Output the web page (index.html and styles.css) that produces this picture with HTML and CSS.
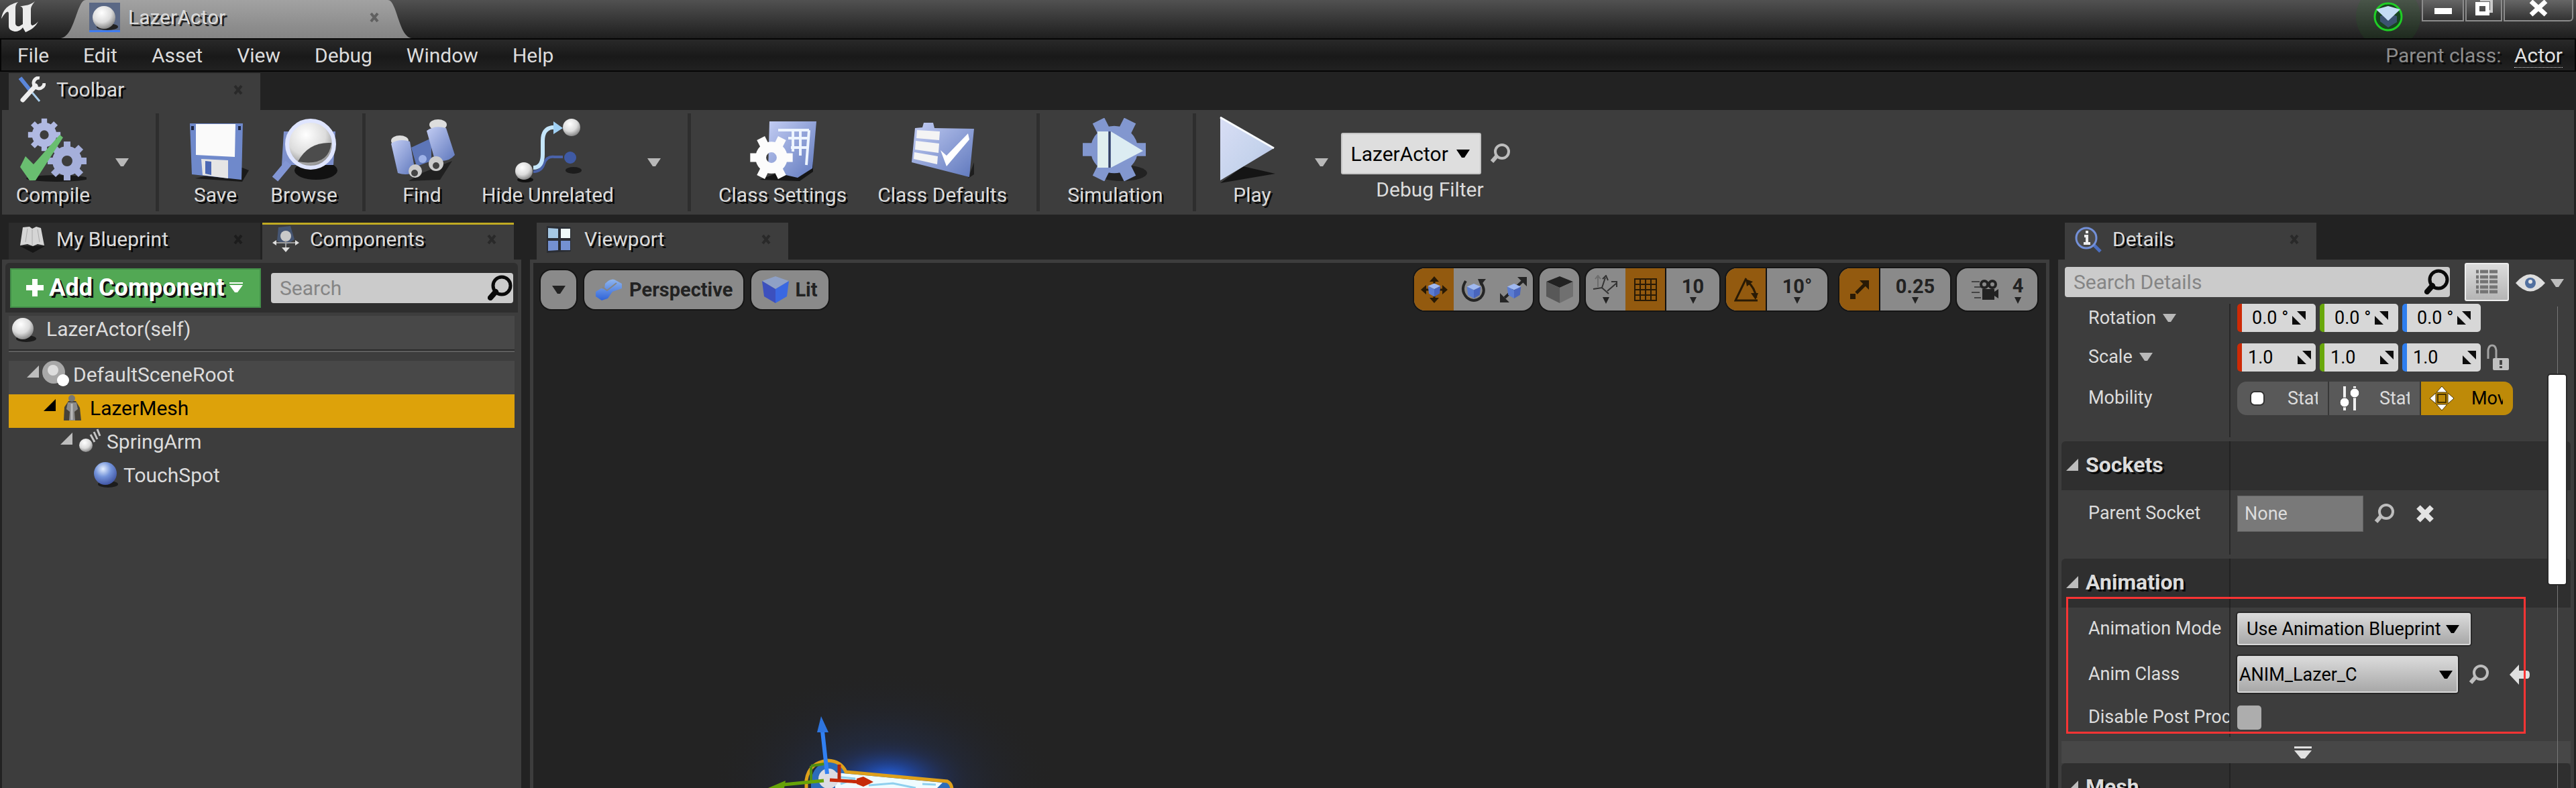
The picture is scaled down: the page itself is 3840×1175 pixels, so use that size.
FILE: index.html
```html
<!DOCTYPE html>
<html lang="en">
  <head>
    <meta charset="UTF-8" />
    <meta name="viewport" content="width=device-width, initial-scale=1.0" />
    <title>LazerActor</title>
    <link rel="stylesheet" href="styles.css">
  </head>
  <body>
    <!-- Shared icon shapes -->
    <svg class="defs" width="0" height="0" aria-hidden="true">
      <defs>
        <linearGradient id="blue" x1="0" y1="0" x2="1" y2="1">
          <stop offset="0" stop-color="#c3cdf3" />
          <stop offset="1" stop-color="#5f78bd" />
        </linearGradient>
        <linearGradient id="deep" x1="0" y1="0" x2="0" y2="1">
          <stop offset="0" stop-color="#8eb5ee" />
          <stop offset="1" stop-color="#2f63d8" />
        </linearGradient>
        <linearGradient id="pale" x1="0" y1="0" x2="1" y2="1">
          <stop offset="0" stop-color="#d9def5" />
          <stop offset="0.6" stop-color="#c5d3ec" />
          <stop offset="1" stop-color="#b0b9de" />
        </linearGradient>
        <radialGradient id="ball" cx="0.4" cy="0.3" r="0.7">
          <stop offset="0" stop-color="#fff" />
          <stop offset="0.6" stop-color="#dcdcdc" />
          <stop offset="1" stop-color="#8a8a8a" />
        </radialGradient>
        <radialGradient id="blueball" cx="0.4" cy="0.3" r="0.7">
          <stop offset="0" stop-color="#e6f0ff" />
          <stop offset="0.5" stop-color="#7393da" />
          <stop offset="1" stop-color="#4257a5" />
        </radialGradient>
        <symbol id="gear" viewBox="0 0 60 60">
          <circle cx="30" cy="30" r="15" fill="none" stroke="currentColor" stroke-width="14" />
          <path d="M30 1v12M30 47v12M1 30h12M47 30h12M9.500 9.500l8.500 8.500M42 42l8.500 8.500M50.500 9.500l-8.500 8.500M18 42l-8.500 8.500" stroke="currentColor" stroke-width="10" />
        </symbol>
        <symbol id="gear6" viewBox="0 0 100 96">
          <circle cx="50" cy="48" r="24" fill="none" stroke="currentColor" stroke-width="24" />
          <path d="M2 48h20M78 48h20M26 4l10 20M74 4l-10 20M26 92l10-20M74 92l-10-20" stroke="currentColor" stroke-width="20" />
        </symbol>
        <symbol id="lens" viewBox="0 0 32 32">
          <circle cx="18" cy="13" r="10" fill="none" stroke="currentColor" stroke-width="4" />
          <path d="M10 20L3 28" stroke="currentColor" stroke-width="6" />
        </symbol>
        <symbol id="lens-big" viewBox="0 0 38 38">
          <circle cx="21" cy="16" r="13" fill="none" stroke="currentColor" stroke-width="5" />
          <path d="M12 25L4 34" stroke="currentColor" stroke-width="8" stroke-linecap="round" />
        </symbol>
        <symbol id="down" viewBox="0 0 20 12"><path d="M0 0h20L12 12h-4z" fill="currentColor" /></symbol>
        <symbol id="tri" viewBox="0 0 18 18"><path d="M18 0v18H0z" fill="currentColor" /></symbol>
        <symbol id="close" viewBox="0 0 16 16"><path d="M3 2l10 12M13 2L3 14" stroke="currentColor" stroke-width="4" /></symbol>
        <symbol id="spin" viewBox="0 0 22 22"><path d="M8 1h13v13zM1 8v13h13z" fill="currentColor" /></symbol>
        <symbol id="cube" viewBox="0 0 30 30">
          <path d="M15 0L29 6L15 13L1 6z" fill="#a0b9f0" /><path d="M1 6l14 7v17L3 23z" fill="#5b7cd0" /><path d="M29 6L15 13v17l12-7z" fill="#4965bd" />
        </symbol>
      </defs>
    </svg>

    <!-- Title bar -->
    <header class="titlebar">
      <svg class="logo" width="60" height="50" viewBox="0 0 60 50"><path d="M2 28C4 16 9 8 27 3c-3 3-4 5-4 9v23c0 3 3 5 6 4l5-3V14c0-2-1-4-4-5 7 0 16-2 22-7-4 5-6 8-6 12v20c0 5 3 6 11-2-4 8-11 13-19 16l-4-7c-3 4-7 6-12 6-5-1-9-3-9-8V21c0-5-3-6-11 7z" fill="#ececec" /></svg>
      <div class="window-tab">
        <svg class="tab-shape" viewBox="0 0 524 57" preserveAspectRatio="none"><defs><linearGradient id="tabfill" x1="0" y1="0" x2="0" y2="1"><stop offset="0" stop-color="#a2a2a2" /><stop offset="1" stop-color="#848484" /></linearGradient></defs><path d="M0 57C22 55 24 0 38 0H488C502 0 504 55 524 57z" fill="url(#tabfill)" /></svg>
        <svg width="46" height="44" viewBox="0 0 46 44"><rect width="46" height="44" fill="#5a6885" /><rect y="41" width="46" height="3" fill="#3f7cf0" /><ellipse cx="27" cy="36" rx="16" ry="5" fill="#222" /><circle cx="22" cy="22" r="17" fill="url(#ball)" /></svg>
        <span>LazerActor</span>
        <button class="close" aria-label="Close tab"><svg width="16" height="16"><use href="#close" /></svg></button>
      </div>
      <svg class="status" width="100" height="57" viewBox="0 0 100 57">
        <circle cx="50" cy="25" r="48" fill="#1d6a1d" opacity="0.16" />
        <circle cx="50" cy="25" r="20" fill="#17451f" stroke="#1fce25" stroke-width="3" />
        <path d="M38 24l12-4 13 4v9L50 41 38 32z" fill="#3c5370" /><path d="M32 14l18-5 18 5-18 17z" fill="#c4dcf4" />
      </svg>
      <div class="window-buttons">
        <button aria-label="Minimize"><svg width="28" height="32"><rect y="13" x="1" width="26" height="9" fill="#fff" /></svg></button>
        <button class="narrow" aria-label="Restore"><svg width="28" height="32"><path d="M8 1h17v17h-4" fill="none" stroke="#ccc" stroke-width="4" /><rect x="4" y="7" width="15" height="14" fill="none" stroke="#fff" stroke-width="6" /></svg></button>
        <button class="wide" aria-label="Close"><svg width="28" height="32"><path d="M3 3l22 20M25 3L3 23" stroke="#fff" stroke-width="7" /></svg></button>
      </div>
    </header>

    <!-- Menu -->
    <nav class="menubar">
      <button>File</button>
      <button>Edit</button>
      <button>Asset</button>
      <button>View</button>
      <button>Debug</button>
      <button>Window</button>
      <button>Help</button>
      <div class="parent-class">Parent class: <a href="#">Actor</a></div>
    </nav>

    <!-- Toolbar -->
    <section class="toolbar-panel">
      <div class="tabs">
        <div class="tab">
          <svg width="40" height="40" viewBox="0 0 40 40"><path d="M2 2l16 20" stroke="#5b87dc" stroke-width="6" /><path d="M20 24l11 13" stroke="#a9cdea" stroke-width="3" /><path d="M6 35L25 14" stroke="#eee" stroke-width="7" stroke-linecap="round" /><path d="M31 2a8 8 0 1 0 7 8" fill="none" stroke="#eee" stroke-width="5" /></svg>
          <span>Toolbar</span>
          <button class="close" aria-label="Close tab"><svg width="16" height="16"><use href="#close" /></svg></button>
        </div>
      </div>
      <div class="toolbar">
        <button class="tool">
          <svg width="100" height="96" viewBox="0 0 100 96"><ellipse cx="56" cy="90" rx="46" ry="5" fill="#191919" /><svg x="12" y="0" width="50" height="50" color="#b0b9e2"><use href="#gear" /></svg><svg x="41" y="34" width="60" height="60" color="#a5afda"><use href="#gear" /></svg><path d="M1 73l8-16 12 12L60 25l5 4L24 93h-9z" fill="#69be70" /></svg>
          <span>Compile</span>
        </button>
        <button class="tool-arrow" aria-label="Compile options"><svg width="20" height="12"><use href="#down" /></svg></button>
        <i class="sep"></i>
        <button class="tool">
          <svg width="100" height="96" viewBox="0 0 100 96"><path d="M20 90l70-16 10 4-10 17z" fill="#1a1a1a" /><path d="M12 8h79l-2 84-74-8z" fill="#6f89cb" /><path d="M21 9h59l-1 49-58-3z" fill="#fafafa" /><path d="M29 61l40 2v27l-38-5z" fill="#e5e5e5" /><path d="M35 64l9 1v20l-9-2z" fill="#4c68b4" /><path d="M14 12h4v6h-4zM84 12h4v6h-4z" fill="#1c2540" /></svg>
          <span>Save</span>
        </button>
        <button class="tool">
          <svg width="100" height="96" viewBox="0 0 100 96"><ellipse cx="68" cy="78" rx="32" ry="14" fill="#111" /><path d="M20 20h77l-3 50H17z" fill="#7d90cc" /><path d="M27 67L7 91" stroke="#8296d4" stroke-width="11" /><circle cx="60" cy="39" r="35" fill="url(#ball)" stroke="#dfe5ff" stroke-width="6" /><path d="M41 65q16-30 50-28-4 36-50 28z" fill="#4c4c4c" /></svg>
          <span>Browse</span>
        </button>
        <i class="sep"></i>
        <button class="tool">
          <svg width="100" height="96" viewBox="0 0 100 96"><path d="M30 94l20-12 45-18-18 28z" fill="#202020" /><path d="M34 44l30-14v34l-22 8z" fill="#5d76b8" /><ellipse cx="17" cy="34" rx="13" ry="8" fill="#ddd" /><path d="M4 38q12-8 28-3l8 45q-12 7-26 2z" fill="url(#blue)" /><ellipse cx="74" cy="10" rx="13" ry="8" fill="#ddd" /><path d="M57 19q12-9 29-4l13 40q-11 13-30 7z" fill="url(#blue)" /><circle cx="40" cy="79" r="10" fill="#ccc" /><circle cx="39" cy="82" r="5" fill="#444" /><circle cx="71" cy="68" r="11" fill="#ccc" /><circle cx="71" cy="71" r="5" fill="#444" /><circle cx="51" cy="61" r="6" fill="#9db2e8" /></svg>
          <span>Find</span>
        </button>
        <button class="tool roomy">
          <svg width="100" height="96" viewBox="0 0 100 96"><ellipse cx="88" cy="78" rx="12" ry="5" fill="#1c1c1c" /><ellipse cx="16" cy="92" rx="12" ry="4" fill="#111" /><path d="M28 80q12 0 16-12t16-10h12" fill="none" stroke="#4a62a8" stroke-width="4" /><circle cx="83" cy="59" r="9" fill="#3f5aa4" /><path d="M28 74q14 0 14-20V34q0-18 14-20h4" fill="none" stroke="#c5e6fb" stroke-width="6" /><path d="M58 5l14 10-14 9z" fill="#9fd0f5" /><circle cx="85" cy="14" r="13" fill="url(#ball)" /><circle cx="14" cy="79" r="13" fill="url(#ball)" /></svg>
          <span>Hide Unrelated</span>
        </button>
        <button class="tool-arrow" aria-label="Hide options"><svg width="20" height="12"><use href="#down" /></svg></button>
        <i class="sep"></i>
        <button class="tool roomy">
          <svg width="100" height="96" viewBox="0 0 100 96"><path d="M15 92l80-30v18L75 94z" fill="#151515" /><path d="M30 5h70l-6 70-22 14-44-10z" fill="url(#blue)" /><path d="M43 18h46M58 30h32M62 44h26M65 18v32M76 18v38M89 18l-4 52" stroke="#eef5ff" stroke-width="4" fill="none" /><svg x="0" y="24" width="66" height="70" color="#fcfcfc"><use href="#gear6" /></svg></svg>
          <span>Class Settings</span>
        </button>
        <button class="tool roomy">
          <svg width="100" height="96" viewBox="0 0 100 96"><path d="M88 90l9-24v18z" fill="#1d1d1d" /><path d="M22 7h14l2 8 59 1-7 72L4 66 9 15l11-1z" fill="url(#blue)" /><path d="M12 18l34 2-1 13-34-3zM10 34l35 4-1 14-35-5zM8 51l35 6-1 12-35-8z" fill="#f4f4f4" /><path d="M47 48l9 8L88 23l2 9-34 40z" fill="#fff" /></svg>
          <span>Class Defaults</span>
        </button>
        <i class="sep"></i>
        <button class="tool roomy">
          <svg width="100" height="96" viewBox="0 0 100 96"><ellipse cx="60" cy="82" rx="38" ry="12" fill="#222" /><svg width="98" height="94" color="#8297cf"><use href="#gear6" /></svg><circle cx="49" cy="48" r="20" fill="#8297cf" /><path d="M24 20h16v54H24z" fill="#e0efef" /><path d="M44 20l48 29-48 25z" fill="#dcecf2" /><path d="M42 20v54" stroke="#35415f" stroke-width="3" /></svg>
          <span>Simulation</span>
        </button>
        <i class="sep"></i>
        <button class="tool">
          <svg width="100" height="100" viewBox="0 0 100 100"><path d="M2 99l34-25 48 11z" fill="#151515" /><path d="M2 0l80 47L2 95z" fill="url(#pale)" /><path d="M2 1l80 46" stroke="#f8fbff" stroke-width="3" /></svg>
          <span>Play</span>
        </button>
        <button class="tool-arrow" aria-label="Play options"><svg width="20" height="12"><use href="#down" /></svg></button>
        <div class="debug-filter">
          <div class="debug-row">
            <div class="select flat">
              <select id="debug-filter"><option>LazerActor</option></select>
              <svg width="20" height="12"><use href="#down" /></svg>
            </div>
            <button class="icon-btn" aria-label="Find object"><svg width="32" height="32"><use href="#lens" /></svg></button>
          </div>
          <label for="debug-filter">Debug Filter</label>
        </div>
      </div>
    </section>

    <main class="panels">
      <!-- Components -->
      <section class="components">
        <div class="tabs">
          <div class="tab inactive">
            <svg width="40" height="40" viewBox="0 0 40 40"><path d="M2 30h37l-18 10z" fill="#161616" /><path d="M6 2l10-1 4 3 6-3 7 2 5 26-10-2-7 3-8-3-11 2z" fill="#d5d5d5" /><path d="M20 5v24M13 4l-3 20M28 5l3 19" stroke="#aaa" stroke-width="1" /></svg>
            <span>My Blueprint</span>
            <button class="close" aria-label="Close tab"><svg width="16" height="16"><use href="#close" /></svg></button>
          </div>
          <div class="tab active">
            <svg width="40" height="40" viewBox="0 0 40 40"><path d="M9 2l18-2 6 20-12 8-14-6z" fill="#465673" /><circle cx="20" cy="15" r="8" fill="#c9c9c9" /><path d="M20 22v12M4 25h32" stroke="#999" stroke-width="2" /><path d="M0 25l6-4v8zM40 25l-6-4v8zM14 32h12l-6 7z" fill="#ddd" /></svg>
            <span>Components</span>
            <button class="close" aria-label="Close tab"><svg width="16" height="16"><use href="#close" /></svg></button>
          </div>
        </div>
        <div class="panel-body">
          <div class="add-bar">
            <button class="add-button">
              <svg width="28" height="28" viewBox="0 0 28 28"><path d="M14 1v26M1 14h26" stroke="#fff" stroke-width="8" /></svg>
              <span>Add Component</span>
              <svg width="20" height="16" viewBox="0 0 20 16"><path d="M0 0h20v2H0zM0 4h20l-8 11H8z" fill="#fff" /></svg>
            </button>
            <div class="search">
              <input type="text" placeholder="Search" aria-label="Search components" />
              <svg width="38" height="38"><use href="#lens-big" /></svg>
            </div>
          </div>
          <div class="self-row">
            <svg width="40" height="40" viewBox="0 0 40 40"><ellipse cx="24" cy="34" rx="15" ry="5" fill="#1c1c1c" /><circle cx="19" cy="19" r="16" fill="url(#ball)" /></svg>
            <span>LazerActor(self)</span>
          </div>
          <ul class="tree">
            <li class="level-1 shaded">
              <svg class="expander" width="18" height="18"><use href="#tri" /></svg>
              <svg width="41" height="40" viewBox="0 0 41 40"><circle cx="18" cy="17" r="17" fill="#a8a8a8" /><circle cx="17" cy="14" r="8" fill="#ddd" /><circle cx="32" cy="29" r="9" fill="#fff" /></svg>
              <span>DefaultSceneRoot</span>
            </li>
            <li class="level-2 selected">
              <svg class="expander" width="18" height="18"><use href="#tri" /></svg>
              <svg width="41" height="40" viewBox="0 0 41 40"><path d="M8 39l1-20 6-9h11l6 10 2 19z" fill="#46423a" /><circle cx="20" cy="6" r="5" fill="#777" /><path d="M14 12h13l2 10-5 4 1 13H16l1-13-5-4z" fill="#8a8a8a" /><path d="M20 14v24" stroke="#bbb" stroke-width="3" /></svg>
              <span>LazerMesh</span>
            </li>
            <li class="level-3">
              <svg class="expander" width="18" height="18"><use href="#tri" /></svg>
              <svg width="41" height="40" viewBox="0 0 41 40"><circle cx="16" cy="26" r="10" fill="url(#ball)" /><path d="M23 10l6 11M28 6l5 11M33 2l4 10" stroke="#c4c4c4" stroke-width="3" /></svg>
              <span>SpringArm</span>
            </li>
            <li class="level-4">
              <svg class="expander" width="18" height="18"></svg>
              <svg width="41" height="40" viewBox="0 0 41 40"><ellipse cx="24" cy="34" rx="15" ry="5" fill="#1c1c1c" /><circle cx="20" cy="18" r="17" fill="url(#blueball)" /></svg>
              <span>TouchSpot</span>
            </li>
          </ul>
        </div>
      </section>

      <!-- Viewport -->
      <section class="viewport">
        <div class="tabs">
          <div class="tab">
            <svg width="40" height="40" viewBox="0 0 40 40"><path d="M0 0l36 2v36L0 40z" fill="#2a2d33" /><path d="M2 3l15 1v14H2z" fill="#a5c8e4" /><path d="M21 4h14v14H21z" fill="#eefafa" /><path d="M2 22h15v14l-15 1zM21 22h14v14H21z" fill="#7491d2" /></svg>
            <span>Viewport</span>
            <button class="close" aria-label="Close tab"><svg width="16" height="16"><use href="#close" /></svg></button>
          </div>
        </div>
        <div class="viewport-body">
          <div class="viewport-bar">
            <div class="pill low"><button class="menu-pill" aria-label="Viewport options"><svg width="20" height="12"><use href="#down" /></svg></button></div>
            <div class="pill low"><button class="text-pill"><svg width="42" height="32" viewBox="0 0 42 32"><path d="M1 19l8-5 5 1 1-8q8-8 14-6l11 6v7L26 19l-7 10-9 3-9-6z" fill="url(#deep)" /><path d="M11 12l7 5 14-11" stroke="#858585" stroke-width="2" fill="none" /></svg>Perspective</button></div>
            <div class="pill low"><button class="text-pill"><svg width="40" height="40" viewBox="0 0 40 40"><path d="M20 0l20 7-20 12L0 7z" fill="#8ea0c6" /><path d="M0 7l20 12v21L3 30z" fill="#3c50be" /><path d="M40 7L20 19v21l17-10z" fill="#3a68e2" /></svg>Lit</button></div>
            <div class="bar-fill"></div>
            <div class="pill">
              <button class="on" aria-label="Translate"><svg width="40" height="40" viewBox="0 0 40 40"><path d="M20 3v34M3 20h34" stroke="#291a05" stroke-width="3" /><path d="M20 0l7 8H13zM20 40l7-8H13zM0 20l8-7v14zM40 20l-8-7v14z" fill="#291a05" /><svg x="10" y="10" width="20" height="21"><use href="#cube" /></svg></svg></button>
              <button aria-label="Rotate"><svg width="40" height="40" viewBox="0 0 40 40"><path d="M8 7q-9 14 2 25 10 8 20 0 9-10 1-22" fill="none" stroke="#252525" stroke-width="4" /><path d="M26 4h12l-8 10z" fill="#252525" /><svg x="9" y="11" width="22" height="22"><use href="#cube" /></svg></svg></button>
              <button aria-label="Scale"><svg width="40" height="40" viewBox="0 0 40 40"><path d="M26 1h14v14zM0 25v14h14z" fill="#252525" /><path d="M7 32L34 7" stroke="#252525" stroke-width="4" /><svg x="10" y="11" width="22" height="22"><use href="#cube" /></svg></svg></button>
            </div>
            <div class="pill"><button aria-label="Coordinate system"><svg width="40" height="40" viewBox="0 0 40 40"><path d="M20 0l20 8-20 9L0 8z" fill="#222" /><path d="M0 8l20 9v23L0 30z" fill="#585858" /><path d="M40 8l-20 9v23l20-10z" fill="#707070" /></svg></button></div>
            <div class="pill">
              <button class="with-caret" aria-label="Surface snapping"><svg class="snap" width="40" height="32" viewBox="0 0 40 32"><path d="M1 21l13-2 10 9M14 19L19 4M22 24L36 12" fill="none" stroke="#333" stroke-width="2" /><path d="M28 10h8v8M15 6l5-5 3 7" fill="none" stroke="#333" stroke-width="2" /><path d="M8 18V3M4 6l4-5 4 5" fill="none" stroke="#6c6c6c" stroke-width="2" /></svg><svg class="caret" width="10" height="10" viewBox="0 0 10 10"><path d="M0 0h10L5 10z" fill="#222" /></svg></button>
              <button class="on edge" aria-label="Grid snap"><svg width="34" height="34" viewBox="0 0 34 34"><path d="M1 1h32v32H1zM9 1v32M17 1v32M25 1v32M1 9h32M1 17h32M1 25h32" fill="none" stroke="#291a05" stroke-width="2" /></svg></button>
              <button class="with-caret value">10<svg class="caret" width="10" height="10" viewBox="0 0 10 10"><path d="M0 0h10L5 10z" fill="#222" /></svg></button>
            </div>
            <div class="pill">
              <button class="on edge" aria-label="Rotation snap"><svg width="36" height="36" viewBox="0 0 36 36"><path d="M18 1L2 34h33M20 6q11 9 13 24" fill="none" stroke="#291a05" stroke-width="3" /><path d="M17 2l11 4-9 7zM25 23h11l-4 10z" fill="#291a05" /></svg></button>
              <button class="with-caret value mid">10°<svg class="caret" width="10" height="10" viewBox="0 0 10 10"><path d="M0 0h10L5 10z" fill="#222" /></svg></button>
            </div>
            <div class="pill gap">
              <button class="on edge" aria-label="Scale snap"><svg width="30" height="30" viewBox="0 0 30 30"><path d="M10 20L26 4" stroke="#291a05" stroke-width="5" /><path d="M15 1h14v14zM1 21h8v8H1z" fill="#291a05" /></svg></button>
              <button class="with-caret value large">0.25<svg class="caret" width="10" height="10" viewBox="0 0 10 10"><path d="M0 0h10L5 10z" fill="#222" /></svg></button>
            </div>
            <div class="pill">
              <button class="camera"><svg width="42" height="30" viewBox="0 0 42 30"><path d="M1 3h12M5 11h10M1 19h12M5 27h10" stroke="#444" stroke-width="2" /><circle cx="20" cy="7" r="5" fill="none" stroke="#222" stroke-width="4" /><circle cx="32" cy="7" r="5" fill="none" stroke="#222" stroke-width="4" /><path d="M17 14h18v4l6-4v14l-6-4v6H17z" fill="#222" /></svg><span class="with-caret">4<svg class="caret" width="10" height="10" viewBox="0 0 10 10"><path d="M0 0h10L5 10z" fill="#222" /></svg></span></button>
            </div>
          </div>
          <!-- Lazer mesh with its transform gizmo -->
          <svg class="scene" width="900" height="220" viewBox="0 0 900 220">
            <defs>
              <radialGradient id="glow"><stop offset="0" stop-color="#2468f0" /><stop offset="0.35" stop-color="#20459e" stop-opacity="0.7" /><stop offset="0.65" stop-color="#22305c" stop-opacity="0.35" /><stop offset="1" stop-color="#232323" stop-opacity="0" /></radialGradient>
            </defs>
            <ellipse cx="520" cy="222" rx="260" ry="180" fill="url(#glow)" opacity="0.35" />
            <ellipse cx="530" cy="205" rx="130" ry="65" fill="url(#glow)" />
            <path d="M414 220V208q4-24 26-27 20 0 26 14l151 15 7 10z" fill="#2c6cba" />
            <path d="M450 197l160 15-8 8H450z" fill="#effcff" />
            <path d="M500 216l36-3 34 7M450 203l30 3-22 8M580 214l20 1" stroke="#8fd0ee" stroke-width="3" fill="none" />
            <path d="M407 220v-12q4-26 32-29 20 1 27 17l151 14q6 3 7 11" fill="none" stroke="#dea01b" stroke-width="5" />
            <circle cx="440" cy="206" r="15" fill="#dcdce2" />
            <path d="M414 209v-22M414 187l20-3" stroke="#4f8d12" stroke-width="4" fill="none" />
            <path d="M456 209v-24" stroke="#b3260b" stroke-width="5" />
            <path d="M433 209l-60 6" stroke="#66a308" stroke-width="5" /><path d="M376 209l-26 11h24z" fill="#66a308" />
            <path d="M442 208l45 3" stroke="#c62a08" stroke-width="5" /><path d="M482 206l10-3 15 8-15 7-10-4z" fill="#c62a08" />
            <path d="M438 199l-7-64" stroke="#3180f2" stroke-width="6" /><path d="M429 113l11 24h-17z" fill="#2e75df" />
          </svg>
        </div>
      </section>

      <!-- Details -->
      <section class="details">
        <div class="tabs">
          <div class="tab">
            <svg width="40" height="40" viewBox="0 0 40 40"><path d="M27 27l11 11" stroke="#4c6fc0" stroke-width="5" /><circle cx="17" cy="18" r="15" fill="#4b4b4b" stroke="#7390d8" stroke-width="3" /><path d="M14 15h4v10M13 26h10M16 9h4" stroke="#eee" stroke-width="4" fill="none" /></svg>
            <span>Details</span>
            <button class="close" aria-label="Close tab"><svg width="16" height="16"><use href="#close" /></svg></button>
          </div>
        </div>
        <div class="details-body">
          <div class="details-search">
            <div class="search">
              <input type="text" placeholder="Search Details" aria-label="Search details" />
              <svg width="38" height="38"><use href="#lens-big" /></svg>
            </div>
            <button class="matrix" aria-label="Property matrix"><svg width="34" height="36" viewBox="0 0 34 36"><path d="M1 3h4M7 3h12M21 3h12M1 11h4M7 11h12M21 11h12M1 18h4M7 18h12M21 18h12M1 26h4M7 26h12M21 26h12M1 33h4M7 33h12M21 33h12" stroke="#747474" stroke-width="5" /></svg></button>
            <button class="eye" aria-label="View options"><svg width="44" height="26" viewBox="0 0 44 26"><path d="M0 13Q22-13 44 13 22 38 0 13z" fill="#dedede" /><circle cx="22" cy="13" r="8" fill="#52709f" /><circle cx="22" cy="11" r="3" fill="#e5e5e5" /></svg><svg width="20" height="12"><use href="#down" /></svg></button>
          </div>
          <div class="details-list">
            <div class="row rotation">
              <div class="name">Rotation <svg width="20" height="12"><use href="#down" /></svg></div>
              <div class="val">
                <div class="num red degree"><input type="text" value="0.0 °" aria-label="Rotation X" /><svg width="22" height="22"><use href="#spin" /></svg></div>
                <div class="num green degree"><input type="text" value="0.0 °" aria-label="Rotation Y" /><svg width="22" height="22"><use href="#spin" /></svg></div>
                <div class="num blue degree"><input type="text" value="0.0 °" aria-label="Rotation Z" /><svg width="22" height="22"><use href="#spin" /></svg></div>
              </div>
            </div>
            <div class="row scale">
              <div class="name">Scale <svg width="20" height="12"><use href="#down" /></svg></div>
              <div class="val">
                <div class="num red"><input type="text" value="1.0" aria-label="Scale X" /><svg width="22" height="22"><use href="#spin" /></svg></div>
                <div class="num green"><input type="text" value="1.0" aria-label="Scale Y" /><svg width="22" height="22"><use href="#spin" /></svg></div>
                <div class="num blue"><input type="text" value="1.0" aria-label="Scale Z" /><svg width="22" height="22"><use href="#spin" /></svg></div>
                <button class="lock" aria-label="Lock scale"><svg width="34" height="40" viewBox="0 0 34 40"><path d="M2 22V9q1-7 6-7t6 7v12" fill="none" stroke="#a3a3a3" stroke-width="3" /><rect x="9" y="21" width="24" height="18" rx="2" fill="#c0c0c0" /><path d="M21 24v7M21 33v3" stroke="#444" stroke-width="4" /></svg></button>
              </div>
            </div>
            <div class="row mobility">
              <div class="name">Mobility</div>
              <div class="val">
                <div class="segments">
                  <label><input type="radio" name="mobility" /><svg width="38" height="38" viewBox="0 0 38 38"><rect x="8" y="9" width="20" height="20" rx="6" fill="#fff" stroke="#333" stroke-width="2" /></svg><span>Static</span></label>
                  <label><input type="radio" name="mobility" /><svg width="38" height="38" viewBox="0 0 38 38"><path d="M11 1v36M26 1v36" stroke="#f0f0f0" stroke-width="4" /><circle cx="11" cy="25" r="7" fill="#fff" stroke="#444" /><circle cx="26" cy="11" r="7" fill="#fff" stroke="#444" /></svg><span>Stationary</span></label>
                  <label><input type="radio" name="mobility" checked /><svg width="38" height="38" viewBox="0 0 38 38"><path d="M19 1l8 9H11zM19 37l8-9H11zM1 19l9-8v16zM37 19l-9-8v16z" fill="#fff" stroke="#4a3500" /><rect x="13" y="13" width="12" height="12" fill="none" stroke="#4a3500" stroke-width="2" /></svg><span>Movable</span></label>
                </div>
              </div>
            </div>
            <div class="row pad"><div class="name"></div><div class="val"></div></div>

            <div class="category">
              <h2><svg width="18" height="18"><use href="#tri" /></svg>Sockets</h2>
              <div class="split"></div>
            </div>
            <div class="row socket">
              <label class="name" for="parent-socket">Parent Socket</label>
              <div class="val">
                <input type="text" id="parent-socket" class="socket-input" value="None" />
                <button class="icon-btn" aria-label="Browse socket"><svg width="32" height="32"><use href="#lens" /></svg></button>
                <button class="icon-btn" aria-label="Clear socket"><svg width="26" height="26" viewBox="0 0 26 26"><path d="M3 3l20 20M23 3L3 23" stroke="#e2e2e2" stroke-width="8" /></svg></button>
              </div>
            </div>
            <div class="row pad"><div class="name"></div><div class="val"></div></div>

            <div class="animation">
              <div class="category">
                <h2><svg width="18" height="18"><use href="#tri" /></svg>Animation</h2>
                <div class="split"></div>
              </div>
              <div class="row mode">
                <label class="name" for="anim-mode">Animation Mode</label>
                <div class="val">
                  <div class="select">
                    <select id="anim-mode"><option>Use Animation Blueprint</option></select>
                    <svg width="20" height="12"><use href="#down" /></svg>
                  </div>
                </div>
              </div>
              <div class="row class">
                <label class="name" for="anim-class">Anim Class</label>
                <div class="val">
                  <div class="select tall">
                    <select id="anim-class"><option>ANIM_Lazer_C</option></select>
                    <svg width="20" height="12"><use href="#down" /></svg>
                  </div>
                  <button class="icon-btn" aria-label="Browse class"><svg width="32" height="32"><use href="#lens" /></svg></button>
                  <button class="icon-btn" aria-label="Use selected"><svg width="30" height="30" viewBox="0 0 30 30"><path d="M0 15L14 0v9h12q4 0 4 6t-4 6H14v9z" fill="#e0e0e0" /></svg></button>
                </div>
              </div>
              <div class="row post">
                <label class="name" for="post-process">Disable Post Process Blueprint</label>
                <div class="val"><input type="checkbox" id="post-process" /></div>
              </div>
              <div class="highlight"></div>
            </div>
            <button class="advanced" aria-label="Show advanced"><svg width="26" height="18" viewBox="0 0 26 18"><path d="M0 0h26v3H0zM0 6h26L16 18h-6z" fill="#e0e0e0" /></svg></button>
            <div class="category">
              <h2><svg width="18" height="18"><use href="#tri" /></svg>Mesh</h2>
              <div class="split"></div>
            </div>
            <div class="scroll-track"><div class="scroll-thumb"></div></div>
          </div>
        </div>
      </section>
    </main>
  </body>
</html>
```
FILE: styles.css
```css
/* Global Styles */
* {
  box-sizing: border-box;
}

body {
  margin: 0;
  height: 100vh;
  display: flex;
  flex-direction: column;
  overflow: hidden;
  background-color: #222;
  color: #dcdcdc;
  font-family: Roboto, "Liberation Sans", sans-serif;
  font-size: 30px;
}

svg {
  display: block;
  flex-shrink: 0;
}

.defs {
  position: absolute;
}

button,
input,
select {
  font: inherit;
  color: inherit;
  margin: 0;
  padding: 0;
  border: none;
  border-radius: 0;
  background: none;
  outline: none;
}

button {
  cursor: pointer;
  display: flex;
  align-items: center;
  justify-content: center;
}

/* Title bar */
.titlebar {
  display: flex;
  height: 57px;
  background: linear-gradient(#515151, #1e1e1e);
}

.logo {
  margin-right: 30px;
}

.window-tab {
  position: relative;
  display: flex;
  align-items: center;
  width: 524px;
  padding: 0 48px 6px 43px;
  text-shadow: 3px 3px 0 #222;
}

.window-tab > * {
  position: relative;
}

.window-tab .tab-shape {
  position: absolute;
  inset: 0;
  width: 100%;
  height: 100%;
}

.window-tab span {
  margin-left: 12px;
}

.close {
  margin-left: auto;
  color: #292929;
}

.window-tab .close {
  color: #606060;
}

.tab.inactive .close {
  color: #1c1c1c;
}

.status {
  margin-left: auto;
}

.window-buttons {
  display: flex;
  gap: 2px;
  height: 32px;
  margin-right: 4px;
}

.window-buttons button {
  width: 63px;
  border: 2px solid #8c8c8c;
  border-top: none;
  background: linear-gradient(#666, #333);
}

.window-buttons .narrow {
  width: 55px;
}

.window-buttons .wide {
  width: 104px;
  border-radius: 0 0 6px 0;
}

/* Menu */
.menubar {
  display: flex;
  align-items: center;
  gap: 51px;
  height: 50px;
  padding: 0 18px 0 24px;
  border: 2px solid #060606;
  background: linear-gradient(#292929, #191919 55%, #212121);
}

.parent-class {
  margin-left: auto;
  color: #8d8d8d;
  text-shadow: 3px 3px 0 #0b0b0b;
}

.parent-class a {
  margin-left: 12px;
  color: #e2e2e2;
  text-decoration: none;
  border-bottom: 1px dotted #ddd;
}

/* Tabs */
.tabs {
  display: flex;
  gap: 3px;
  padding-left: 10px;
}

.tab {
  display: flex;
  align-items: center;
  width: 375px;
  height: 55px;
  padding: 0 25px 6px 15px;
  background-color: #3d3d3d;
  text-shadow: 3px 3px 0 #080808;
}

.tab span {
  margin-left: 16px;
}

.tab.inactive {
  background-color: #2c2c2c;
}

.tab.active {
  border-top: 3px solid #c0aa22;
  padding-bottom: 9px;
}

/* Toolbar */
.toolbar-panel {
  padding: 2px 3px 0;
}

.toolbar {
  display: flex;
  height: 156px;
  padding: 0 10px;
  background-color: #3d3d3d;
}

.tool {
  flex-direction: column;
  justify-content: flex-start;
  min-width: 132px;
  height: 156px;
  padding: 10px 10px 0;
  text-shadow: 3px 3px 0 #080808;
  white-space: nowrap;
}

.tool.roomy {
  padding: 10px 23px 0;
}

.tool > svg {
  height: 100px;
}

.tool span {
  line-height: 34px;
}

.tool-arrow {
  width: 66px;
  height: 156px;
  padding-left: 8px;
  color: #b8b8b8;
}

.sep {
  width: 5px;
  height: 146px;
  margin: 5px 18px 0 21px;
  background-color: #2e2e2e;
}

.debug-filter {
  padding-top: 34px;
  text-align: center;
}

.debug-row {
  display: flex;
  align-items: center;
  gap: 13px;
  margin-bottom: 5px;
}

.debug-filter label {
  line-height: 34px;
  padding-left: 12px;
}

.icon-btn {
  color: #bdbdbd;
}

/* Drop-downs: the arrow shares the cell with the select */
.select {
  display: grid;
  align-items: center;
  color: #000;
}

.select > * {
  grid-area: 1 / 1;
}

.select svg {
  justify-self: end;
  margin-right: 17px;
  pointer-events: none;
}

.select select {
  appearance: none;
  width: 348px;
  height: 48px;
  padding-left: 12px;
  border: 2px solid #d8d8d8;
  border-radius: 3px;
  background: linear-gradient(#dadada, #a8a8a8);
  box-shadow: 0 0 0 2px #282828;
}

.select.tall select {
  width: 329px;
  height: 55px;
  padding-left: 1px;
}

.select.tall svg {
  margin-right: 8px;
}

.select.flat select {
  width: 209px;
  height: 62px;
  padding-left: 13px;
  border-color: #c4c4c4;
  background: #dedede;
  box-shadow: none;
}

/* Panels */
.panels {
  flex: 1;
  display: flex;
  gap: 13px;
  min-height: 0;
  padding: 12px 3px 0;
}

.panels > section {
  display: flex;
  flex-direction: column;
  min-width: 0;
}

.components {
  width: 774px;
}

.viewport {
  flex: 1;
}

.details {
  width: 769px;
}

.panel-body {
  flex: 1;
  padding: 5px;
  background-color: #3d3d3d;
}

/* Components */
.add-bar {
  display: flex;
  align-items: center;
  gap: 15px;
  height: 74px;
  padding: 0 7px;
  background-color: #2e2e2e;
  border-radius: 6px 6px 0 0;
}

.add-button {
  gap: 7px;
  width: 374px;
  height: 59px;
  padding-right: 4px;
  border: 2px solid #438f49;
  background-color: #52a854;
  color: #fff;
  font-size: 36px;
  font-weight: 700;
  text-shadow: 3px 3px 0 #111;
  white-space: nowrap;
}

.search {
  flex: 1;
  display: flex;
  align-items: center;
  min-width: 0;
  height: 45px;
  border-radius: 4px;
  background-color: #cbcbcb;
  color: #0a0a0a;
}

.search input {
  flex: 1;
  min-width: 0;
  padding-left: 13px;
}

.search input::placeholder {
  color: #858585;
  opacity: 1;
}

.self-row {
  display: flex;
  height: 50px;
  margin: 5px 5px 15px;
  padding-left: 2px;
  background-color: #484848;
  line-height: 40px;
  box-shadow: 0 2px 0 #2a2a2a, 0 4px 0 #5e5e5e;
}

.self-row span {
  margin-left: 14px;
}

.tree {
  list-style: none;
  margin: 17px 5px 0;
  padding: 0;
}

.tree li {
  display: flex;
  height: 50px;
  line-height: 42px;
}

.tree .expander {
  margin: 7px 4px 0 0;
  color: #bdbdbd;
}

.tree span {
  margin-left: 6px;
}

.tree .level-1 {
  padding-left: 27px;
}

.tree .level-2 {
  padding-left: 52px;
}

.tree .level-3 {
  padding-left: 77px;
}

.tree .level-4 {
  padding-left: 102px;
}

.tree .shaded {
  background-color: #484848;
}

.tree .selected,
.tree .selected .expander {
  color: #000;
}

.tree .selected {
  background-color: #dda20a;
}

/* Viewport */
.viewport-body {
  flex: 1;
  display: flex;
  flex-direction: column;
  min-height: 0;
  border: 5px solid #3d3d3d;
  border-bottom: none;
  background-color: #232323;
}

.viewport-bar {
  display: flex;
  align-items: center;
  gap: 10px;
  padding: 8px 13px 0 11px;
  color: #222;
  font-size: 29px;
  font-weight: 700;
}

.bar-fill {
  flex: 1;
}

.pill {
  display: flex;
  height: 63px;
  border-radius: 16px;
  overflow: hidden;
  background-color: #8a8a8a;
  box-shadow: 0 0 0 2px #151515;
}

.pill.low {
  height: 58px;
  margin-right: 2px;
}

.pill.gap {
  margin-left: 8px;
}

.pill button {
  width: 59px;
}

.pill .menu-pill {
  width: 53px;
}

.pill .text-pill {
  width: auto;
  gap: 9px;
  padding: 0 16px;
}

.pill .on {
  background-color: #935a0f;
}

.pill .edge {
  width: 61px;
  border-right: 2px solid #111;
}

.with-caret {
  flex-direction: column;
  position: relative;
}

.pill .value {
  width: 79px;
  padding-bottom: 10px;
}

.pill .mid {
  width: 90px;
}

.pill .large {
  width: 104px;
}

.snap {
  margin-bottom: 12px;
}

.caret {
  position: absolute;
  bottom: 10px;
  left: 50%;
  margin-left: -5px;
}

.pill .camera {
  width: 120px;
  gap: 20px;
}

.camera .with-caret {
  height: 63px;
  padding-top: 9px;
}

.scene {
  margin-top: auto;
}

/* Details */
.details-body {
  flex: 1;
  display: flex;
  flex-direction: column;
  min-height: 0;
  padding: 0 5px;
  background-color: #3d3d3d;
  font-size: 27px;
}

.details-search {
  display: flex;
  align-items: center;
  height: 66px;
  padding: 4px 10px 0 5px;
  font-size: 30px;
}

.details-search .search {
  margin-bottom: 4px;
}

.matrix {
  width: 66px;
  height: 57px;
  margin: 0 10px 4px 22px;
  border: 2px solid #eee;
  border-radius: 3px;
  background: linear-gradient(#dcdcdc, #b5b5b5);
}

.eye {
  gap: 8px;
  color: #bdbdbd;
}

.details-list {
  flex: 1;
  min-height: 0;
  position: relative;
  overflow: hidden;
}

.row {
  display: grid;
  grid-template-columns: 250px 1fr;
}

.name {
  display: flex;
  align-items: center;
  gap: 10px;
  padding: 0 0 2px 40px;
  overflow: hidden;
  white-space: nowrap;
}

.name svg {
  color: #b8b8b8;
}

.val {
  display: flex;
  align-items: center;
  padding-left: 10px;
  border-left: 2px solid #282828;
}

.rotation {
  height: 51px;
}

.rotation > * {
  padding-bottom: 9px;
}

.scale {
  height: 58px;
}

.mobility {
  height: 64px;
}

.pad {
  height: 26px;
  margin-bottom: 6px;
}

.socket {
  height: 70px;
}

.mode {
  height: 64px;
}

.class {
  height: 71px;
}

.post {
  height: 58px;
}

.num {
  display: flex;
  align-items: center;
  width: 117px;
  height: 42px;
  margin-right: 6px;
  padding: 0 6px 0 9px;
  border-left: 7px solid;
  border-radius: 5px;
  background-color: #d7d7d7;
}

.num input {
  width: 0;
  flex: 1;
  color: #000;
}

.num svg {
  color: #0d0d0d;
}

.degree {
  padding: 0 14px 0 15px;
}

.red {
  border-color: #cd2a06;
}

.green {
  border-color: #69a80a;
}

.blue {
  border-color: #2e7eef;
}

.lock {
  margin-left: 3px;
}

.segments {
  display: flex;
  height: 50px;
  border-radius: 14px;
  overflow: hidden;
  background-color: #595959;
}

.segments label {
  display: flex;
  align-items: center;
  width: 137px;
  padding: 0 15px 0 12px;
  border-right: 2px solid #383838;
}

.segments label:last-child {
  border-right: none;
}

.segments input {
  position: absolute;
  opacity: 0;
}

.segments span {
  margin-left: 25px;
  overflow: hidden;
  white-space: nowrap;
}

.segments label:has(:checked) {
  background-color: #be8a08;
  color: #000;
}

.category {
  display: grid;
  grid-template-columns: 250px 1fr;
  height: 73px;
  border-radius: 6px 6px 0 0;
  background-color: #2f2f2f;
}

.category h2 {
  display: flex;
  align-items: center;
  gap: 11px;
  margin: 0;
  padding: 0 0 4px 7px;
  font-size: 32px;
  font-weight: 700;
  text-shadow: 3px 3px 0 #080808;
}

.category svg {
  color: #bdbdbd;
}

.split {
  border-left: 2px solid #222;
}

.socket-input {
  width: 188px;
  height: 54px;
  margin-right: 16px;
  padding-left: 10px;
  border: 1px solid #626262;
  background-color: #797979;
}

.socket .icon-btn + .icon-btn {
  margin-left: 31px;
}

.class .icon-btn {
  margin-left: 16px;
}

.class .icon-btn + .icon-btn {
  margin-left: 29px;
}

input[type="checkbox"] {
  appearance: none;
  width: 36px;
  height: 36px;
  border-radius: 5px;
  background-color: #adadad;
}

.animation {
  position: relative;
}

/* Callout round the animation settings */
.highlight {
  position: absolute;
  inset: 57px 67px 5px 7px;
  border: 3px solid #fc3434;
  pointer-events: none;
}

.advanced {
  width: 100%;
  height: 33px;
  margin-top: 6px;
  padding-right: 40px;
  background-color: #474747;
}

.scroll-track {
  position: absolute;
  top: 4px;
  right: 19px;
  bottom: 0;
  width: 1px;
  background-color: #777;
}

.scroll-thumb {
  width: 26px;
  height: 312px;
  margin: 102px 0 0 -13px;
  border-radius: 3px;
  background-color: #fff;
  box-shadow: 0 0 0 2px #282828;
}
```
